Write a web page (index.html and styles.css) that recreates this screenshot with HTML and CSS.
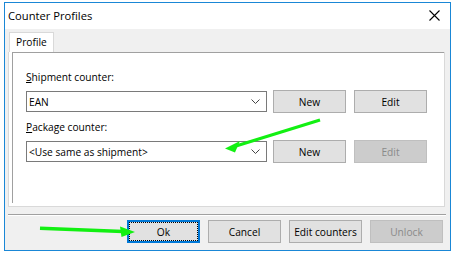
FILE: index.html
```html
<!DOCTYPE html>
<html>
<head>
<meta charset="utf-8">
<link rel="stylesheet" href="styles.css">
</head>
<body>
<div class="window">
  <div class="titlebar">
    <span class="title">Counter Profiles</span>
    <svg class="close" width="11" height="11" viewBox="0 0 11 11"><path d="M0.5 0.5 L10.5 10.5 M10.5 0.5 L0.5 10.5" stroke="#000" stroke-width="1.1" fill="none"/></svg>
  </div>
  <div class="client">
    <div class="tabstrip"><div class="tab">Profile</div></div>
    <div class="tabpage">
      <div class="panel">
        <div class="label"><u>S</u>hipment counter:</div>
        <div class="row">
          <div class="combo"><span>EAN</span><svg class="chev" width="9" height="5" viewBox="0 0 9 5"><path d="M0.5 0.5 L4.5 4.5 L8.5 0.5" stroke="#444" fill="none"/></svg></div>
          <div class="btn">New</div>
          <div class="btn">Edit</div>
        </div>
        <div class="label label2"><u>P</u>ackage counter:</div>
        <div class="row">
          <div class="combo"><span>&lt;Use same as shipment&gt;</span><svg class="chev" width="9" height="5" viewBox="0 0 9 5"><path d="M0.5 0.5 L4.5 4.5 L8.5 0.5" stroke="#444" fill="none"/></svg></div>
          <div class="btn">New</div>
          <div class="btn disabled">Edit</div>
        </div>
      </div>
    </div>
    <div class="separator"></div>
    <div class="buttons">
      <div class="btn default"><span class="focus">Ok</span></div>
      <div class="btn">Cancel</div>
      <div class="btn">Edit counters</div>
      <div class="btn disabled">Unlock</div>
    </div>
  </div>
</div>
<svg class="arrows" width="453" height="253" viewBox="0 0 453 253">
  <line x1="320" y1="120" x2="236" y2="146" stroke="#12f012" stroke-width="3"/>
  <polygon points="225,148.5 240,141 235,152.5" fill="#12f012"/>
  <line x1="40" y1="228.3" x2="123" y2="231.6" stroke="#12f012" stroke-width="3.5"/>
  <polygon points="135,232 120,226.5 121.5,237" fill="#12f012"/>
</svg>
</body>
</html>
```
FILE: styles.css
```css
html, body {
  margin: 0;
  padding: 0;
  background: #ffffff;
}
body {
  position: relative;
  width: 453px;
  height: 253px;
  overflow: hidden;
  font-family: "Open Sans", "Noto Sans", sans-serif;
  font-size: 10.2px;
  color: #000;
}
.window {
  margin: 2px 0 0 4px;
  width: 447px;
  height: 249px;
  box-sizing: border-box;
  border: 1px solid #1a87d6;
  display: flex;
  flex-direction: column;
}
.titlebar {
  height: 26px;
  background: #fff;
  display: flex;
  align-items: center;
  justify-content: space-between;
  flex: none;
}
.title {
  margin-left: 3px;
  font-size: 11.2px;
  margin-top: -1px;
}
.close {
  margin-right: 10px;
  margin-top: -1px;
}
.client {
  flex: 1;
  background: #f0f0f0;
  padding: 3px 4px 0 3px;
  display: flex;
  flex-direction: column;
}
.tabstrip {
  display: flex;
  height: 20px;
}
.tab {
  margin-left: 1px;
  width: 45px;
  height: 20px;
  box-sizing: border-box;
  border: 1px solid #d9d9d9;
  border-bottom: none;
  background: #fff;
  padding-left: 6px;
  line-height: 19px;
}
.tabpage {
  width: 437px;
  box-sizing: border-box;
  border: 1px solid #d9d9d9;
  border-top: none;
  background: #fff;
  padding: 0 0 3px 3px;
}
.panel {
  height: 151px;
  box-sizing: border-box;
  border-left: 1px solid #a0a0a0;
  border-top: 1px solid #a0a0a0;
  padding: 17px 0 0 13px;
}
.label {
  height: 14px;
  line-height: 14px;
}
.label2 {
  margin-top: 7px;
}
.row {
  display: flex;
  align-items: center;
  height: 23px;
  margin-top: 6px;
}
.combo {
  width: 241px;
  height: 21px;
  box-sizing: border-box;
  border: 1px solid #7a7a7a;
  background: #fff;
  display: flex;
  align-items: center;
  justify-content: space-between;
  padding: 0 6px 0 2px;
  margin-right: 6px;
}
.chev {
  display: block;
}
.btn {
  width: 73px;
  height: 23px;
  box-sizing: border-box;
  border: 1px solid #adadad;
  background: #e1e1e1;
  display: flex;
  align-items: center;
  justify-content: center;
  margin-right: 8px;
}
.btn.disabled {
  background: #cccccc;
  border-color: #bfbfbf;
  color: #8a8a8a;
}
.btn.default {
  border: 2px solid #0078d7;
  padding: 0;
}
.focus {
  display: flex;
  align-items: center;
  justify-content: center;
  width: 100%;
  height: 100%;
  box-sizing: border-box;
  border: 1px dotted #000;
}
.separator {
  margin-top: 7px;
  height: 1px;
  background: #a0a0a0;
  border-bottom: 1px solid #fff;
}
.buttons {
  display: flex;
  justify-content: flex-end;
  margin-top: 4px;
  margin-right: -5px;
}
.arrows {
  position: absolute;
  left: 0;
  top: 0;
  pointer-events: none;
}
```
